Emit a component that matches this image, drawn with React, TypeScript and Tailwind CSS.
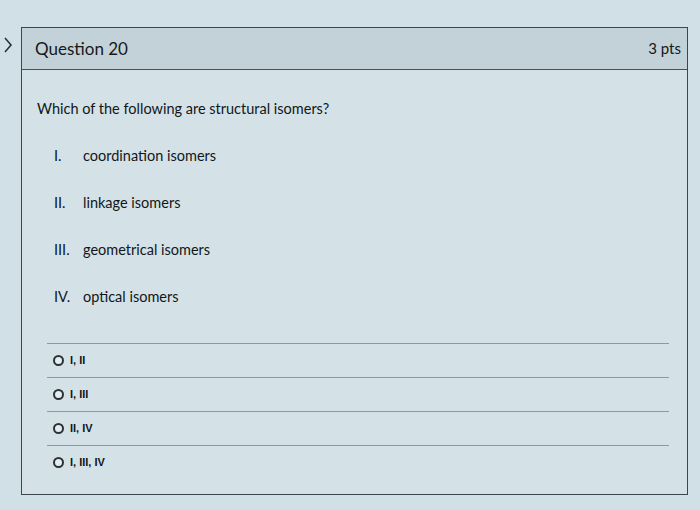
import React from 'react';

const statements = [
  { num: 'I.', text: 'coordination isomers' },
  { num: 'II.', text: 'linkage isomers' },
  { num: 'III.', text: 'geometrical isomers' },
  { num: 'IV.', text: 'optical isomers' },
];

const answers = ['I, II', 'I, III', 'II, IV', 'I, III, IV'];

export default function App() {
  return (
    <div className="w-[700px] h-[510px] bg-[#d1e0e7] flex pt-[27px] overflow-hidden" style={{ fontFamily: 'Lato, "Open Sans", sans-serif' }}>
      <div className="w-[21px] shrink-0 pt-[9px] pl-[3px] text-[#2a3236]">
        <svg width="10" height="18" viewBox="0 0 10 18" fill="none" stroke="currentColor" strokeWidth="1.6">
          <path d="M2 2 L8 9 L2 16" />
        </svg>
      </div>
      <div className="w-[667px] h-[468px] border border-[#3b474d] bg-[#d4e2e8] flex flex-col">
        <div className="h-[42px] bg-[#c3d2d8] border-b border-[#46525a] flex items-center justify-between pl-[13px] pr-[6px] shrink-0">
          <span className="text-[17px] text-[#15191b]">Question 20</span>
          <span className="text-[15px] text-[#15191b]">3 pts</span>
        </div>
        <div className="pt-[30px] pl-[15px] text-[#121618]">
          <p className="text-[14.5px] leading-[18px]">Which of the following are structural isomers?</p>
          <div className="mt-[29px] flex flex-col gap-[29px] pl-[17px]">
            {statements.map((s) => (
              <div key={s.num} className="flex text-[14.5px] leading-[18px]">
                <span className="w-[29px]">{s.num}</span>
                <span>{s.text}</span>
              </div>
            ))}
          </div>
        </div>
        <div className="mt-[37px] ml-[25px] mr-[18px] flex flex-col">
          {answers.map((a) => (
            <div key={a} className="h-[34px] border-t border-[#8d999f] flex items-center pl-[6px] gap-[6px]">
              <span className="w-[11px] h-[11px] rounded-full border-[2px] border-[#2a3236] bg-[#e4eef2]" />
              <span className="text-[11px] font-bold text-[#121618]" style={{ fontFamily: '"Liberation Sans", Arial, sans-serif' }}>{a}</span>
            </div>
          ))}
        </div>
      </div>
    </div>
  );
}
